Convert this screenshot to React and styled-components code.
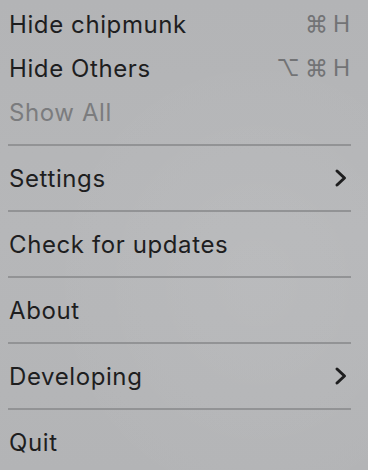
import React from "react";
import styled, { createGlobalStyle } from "styled-components";

const Global = createGlobalStyle`
  html, body { margin: 0; padding: 0; }
  body {
    width: 368px;
    height: 470px;
    overflow: hidden;
    background: #b4b5b7;
    font-family: Inter, "Noto Sans", "Liberation Sans", sans-serif;
    -webkit-font-smoothing: antialiased;
  }
`;

const Menu = styled.div`
  width: 368px;
  height: 470px;
  box-sizing: border-box;
  padding: 2px 18px 0 9px;
  background:
    radial-gradient(ellipse at 70% 60%, rgba(255,255,255,0.06), rgba(255,255,255,0) 60%),
    linear-gradient(180deg, #b3b4b6 0%, #b6b7b9 50%, #b3b4b6 100%);
  display: flex;
  flex-direction: column;
`;

const Item = styled.div`
  height: 44px;
  display: flex;
  align-items: center;
  justify-content: space-between;
  font-size: 24px;
  letter-spacing: 0.6px;
  color: ${p => (p.$disabled ? "#7b7c7e" : "#1e1e1f")};
`;

const Label = styled.span`
  white-space: nowrap;
`;

const Shortcut = styled.span`
  display: flex;
  align-items: center;
  gap: 5px;
  color: #727375;
  font-size: 23px;
  letter-spacing: 0;
`;

const Key = styled.span`
  display: inline-block;
`;

const Sep = styled.div`
  height: 2px;
  margin: 10px -1px 10px -1px;
  background: #929395;
`;

const Chevron = () => (
  <svg width="14" height="20" viewBox="0 0 14 20" style={{ marginRight: 2 }}>
    <path d="M3 3 L10.5 10 L3 17" fill="none" stroke="#1e1e1f" strokeWidth="3" strokeLinecap="round" strokeLinejoin="round" />
  </svg>
);

export default function App() {
  return (
    <>
      <Global />
      <Menu>
        <Item>
          <Label>Hide chipmunk</Label>
          <Shortcut><Key>⌘</Key><Key>H</Key></Shortcut>
        </Item>
        <Item>
          <Label>Hide Others</Label>
          <Shortcut><Key>⌥</Key><Key>⌘</Key><Key>H</Key></Shortcut>
        </Item>
        <Item $disabled>
          <Label>Show All</Label>
        </Item>
        <Sep />
        <Item>
          <Label>Settings</Label>
          <Chevron />
        </Item>
        <Sep />
        <Item>
          <Label>Check for updates</Label>
        </Item>
        <Sep />
        <Item>
          <Label>About</Label>
        </Item>
        <Sep />
        <Item>
          <Label>Developing</Label>
          <Chevron />
        </Item>
        <Sep />
        <Item>
          <Label>Quit</Label>
        </Item>
      </Menu>
    </>
  );
}
